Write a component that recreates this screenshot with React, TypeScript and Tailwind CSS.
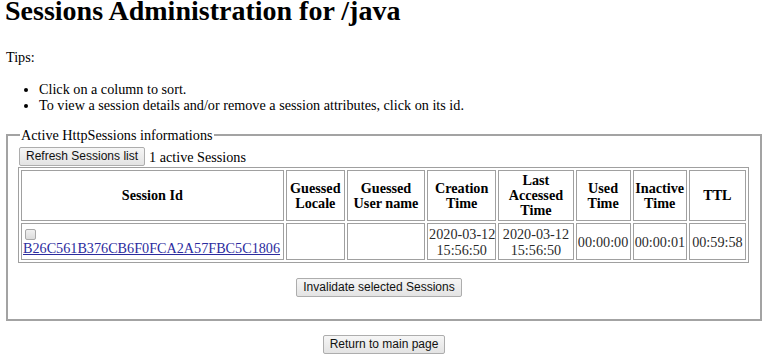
const headers = [
  { label: ["Session Id"], w: "w-[262px]" },
  { label: ["Guessed", "Locale"], w: "w-[59px]" },
  { label: ["Guessed", "User name"], w: "w-[78px]" },
  { label: ["Creation", "Time"], w: "w-[69px]" },
  { label: ["Last", "Accessed", "Time"], w: "w-[75px]" },
  { label: ["Used", "Time"], w: "w-[55px]" },
  { label: ["Inactive", "Time"], w: "w-[54px]" },
  { label: ["TTL"], w: "w-[57px]" },
];

const cell = "border border-[#a0a0a0] border-solid p-[1px] text-center align-middle whitespace-nowrap";

function Btn({ children }: { children: React.ReactNode }) {
  return (
    <button className="h-[19px] px-[6px] border border-[#adadad] rounded-[2px] bg-gradient-to-b from-[#f6f6f6] to-[#e3e3e3] font-['Liberation_Sans',Arial,sans-serif] text-[12px] leading-[17px] text-[#111]">
      {children}
    </button>
  );
}

export default function App() {
  return (
    <div className="w-[768px] h-[360px] overflow-hidden bg-white text-black font-['Liberation_Serif','Times_New_Roman',serif] text-[14.2px] leading-[16px] px-[6px]">
      <h1 className="text-[28px] leading-[32px] font-bold mt-[-5px] ml-[-1px]">Sessions Administration for /java</h1>

      <p className="mt-[22px]">Tips:</p>
      <ul className="list-disc pl-[33px] mt-[16px]">
        <li>Click on a column to sort.</li>
        <li>To view a session details and/or remove a session attributes, click on its id.</li>
      </ul>

      <fieldset className="mt-[15px] border-2 border-solid border-[#a3a3a3] pl-[10px] pr-[10px] pt-[0px] h-[193px]">
        <legend className="px-[1px] ml-[2px] leading-[14px]">Active HttpSessions informations</legend>
        <div className="flex items-center gap-[4px] mt-[5px] ml-[1px]">
          <Btn>Refresh Sessions list</Btn>
          <span>1 active Sessions</span>
        </div>
        <table className="table-fixed w-[731px] border-separate border-spacing-[2px] border border-solid border-[#a0a0a0] mt-[1px]">
          <thead>
            <tr className="h-[51px]">
              {headers.map((h) => (
                <th key={h.label.join(" ")} className={`${cell} ${h.w} font-bold leading-[15px]`}>
                  {h.label.map((l) => (
                    <div key={l}>{l}</div>
                  ))}
                </th>
              ))}
            </tr>
          </thead>
          <tbody>
            <tr className="h-[37px] text-[#2a2a2a]">
              <td className={`${cell} text-left`}>
                <input
                  type="checkbox"
                  className="appearance-none w-[11px] h-[11px] ml-[2px] mt-[1px] block border border-[#a8a8a8] rounded-[2px] bg-gradient-to-b from-[#f0f0f0] to-[#dcdcdc]"
                />
                <a href="#" className="text-[#2b2b9e] underline">B26C561B376CB6F0FCA2A57FBC5C1806</a>
              </td>
              <td className={cell}></td>
              <td className={cell}></td>
              <td className={cell}>
                <div>2020-03-12</div>
                <div>15:56:50</div>
              </td>
              <td className={cell}>
                <div>2020-03-12</div>
                <div>15:56:50</div>
              </td>
              <td className={cell}>00:00:00</td>
              <td className={cell}>00:00:01</td>
              <td className={cell}>00:59:58</td>
            </tr>
          </tbody>
        </table>
        <div className="flex justify-center mt-[15px] pr-[10px]">
          <Btn>Invalidate selected Sessions</Btn>
        </div>
      </fieldset>

      <div className="flex justify-center mt-[14px]">
        <Btn>Return to main page</Btn>
      </div>
    </div>
  );
}
